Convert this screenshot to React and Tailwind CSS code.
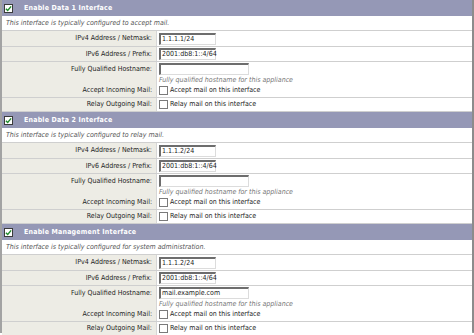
import React from 'react';

const sections = [
  {
    title: 'Enable Data 1 Interface',
    note: 'This interface is typically configured to accept mail.',
    ipv4: '1.1.1.1/24',
    ipv6: '2001:db8:1::4/64',
    host: '',
  },
  {
    title: 'Enable Data 2 Interface',
    note: 'This interface is typically configured to relay mail.',
    ipv4: '1.1.1.2/24',
    ipv6: '2001:db8:1::4/64',
    host: '',
  },
  {
    title: 'Enable Management Interface',
    note: 'This interface is typically configured for system administration.',
    ipv4: '1.1.1.2/24',
    ipv6: '2001:db8:1::4/64',
    host: 'mail.example.com',
  },
];

function HeaderCheck() {
  return (
    <span className="flex h-[9px] w-[9px] items-center justify-center border border-[#3b3b3b] bg-white">
      <svg viewBox="0 0 8 8" className="h-[7px] w-[7px]">
        <path d="M1 4.2 L3.1 6.3 L7 1.6" fill="none" stroke="#1f8a2a" strokeWidth="1.6" />
      </svg>
    </span>
  );
}

function Box() {
  return <span className="h-[9px] w-[9px] shrink-0 border border-[#7a7a7a] bg-white" />;
}

function Field({ value, w }) {
  return (
    <div
      className={`flex h-[12px] shrink-0 items-center border-t-2 border-l-2 border-r border-b border-t-[#6d6d6d] border-l-[#6d6d6d] border-r-[#dcdcdc] border-b-[#dcdcdc] bg-white pl-[1px] text-[#222] ${w}`}
    >
      {value}
    </div>
  );
}

function Row({ label, h, top, children }) {
  return (
    <div className={`grid grid-cols-[155px_1fr] border-b border-[#cfcfcf] ${h}`}>
      <div
        className={`flex justify-end border-r border-[#d6d6d6] bg-[#edece5] pr-[4px] text-[#222] ${top ? 'items-start pt-[4px]' : 'items-center'}`}
      >
        {label}
      </div>
      <div className={`flex bg-white pl-[2px] ${top ? 'flex-col pt-[1px]' : 'items-center'}`}>{children}</div>
    </div>
  );
}

function Section({ s }) {
  return (
    <div>
      <div className="flex h-[16px] items-center gap-[11px] bg-[#9598b6] pl-[2px] font-bold text-white">
        <HeaderCheck />
        <span className="tracking-[0.2px]">{s.title}</span>
      </div>
      <div className="flex h-[15px] items-center border-b border-[#cfcfcf] bg-white pl-[4px] italic text-[#555]">
        {s.note}
      </div>
      <Row label="IPv4 Address / Netmask:" h="h-[16px]">
        <Field value={s.ipv4} w="w-[57px]" />
      </Row>
      <Row label="IPv6 Address / Prefix:" h="h-[15px]">
        <Field value={s.ipv6} w="w-[57px]" />
      </Row>
      <Row label="Fully Qualified Hostname:" h="h-[22px]" top>
        <Field value={s.host} w="w-[90px]" />
        <div className="mt-[2px] italic text-[#777]">Fully qualified hostname for this appliance</div>
      </Row>
      <Row label="Accept Incoming Mail:" h="h-[14px]">
        <Box />
        <span className="ml-[2px] text-[#222]">Accept mail on this interface</span>
      </Row>
      <Row label="Relay Outgoing Mail:" h="h-[14px]">
        <Box />
        <span className="ml-[2px] text-[#222]">Relay mail on this interface</span>
      </Row>
    </div>
  );
}

export default function App() {
  return (
    <div
      className="h-[335px] w-[474px] overflow-hidden bg-white text-[7px] leading-none"
      style={{ fontFamily: '"DejaVu Sans Condensed", "DejaVu Sans", sans-serif' }}
    >
      <div className="h-[333px] border-l-2 border-r-2 border-b-2 border-l-[#a3a3a3] border-r-[#8c8c8c] border-b-[#a0a0a0]">
        {sections.map((s) => (
          <Section key={s.title} s={s} />
        ))}
      </div>
    </div>
  );
}
